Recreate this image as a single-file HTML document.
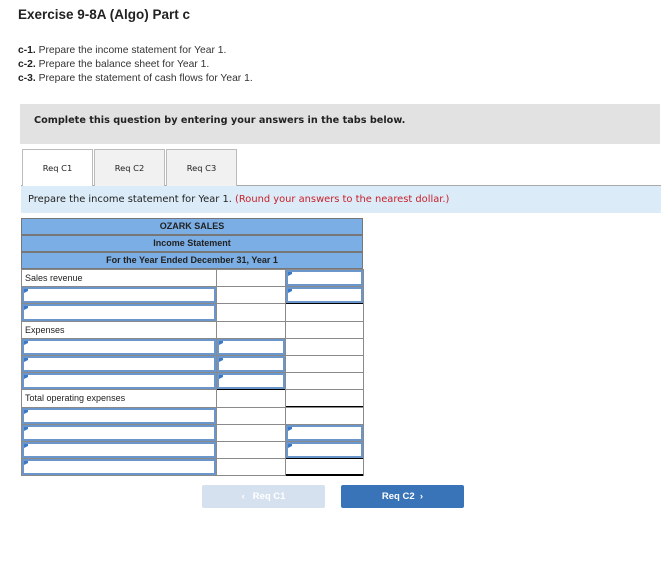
<!DOCTYPE html>
<html><head><style>
body{margin:0;width:667px;height:570px;background:#fff;font-family:"Liberation Sans",sans-serif;position:relative;overflow:hidden}
.a{position:absolute}
h1{position:absolute;left:18px;top:7px;margin:0;font-size:13.5px;font-weight:bold;color:#222}
.q{position:absolute;left:18px;font-size:10.3px;color:#333}
.q b{color:#222}
.c{position:absolute;border:1px solid #8a8a8a;box-sizing:border-box;background:#fff;font-size:9px;color:#222;padding:3px 0 0 3px;font-family:"Liberation Sans",sans-serif}
.in::after{content:"";position:absolute;left:0;top:0;right:0;bottom:0;border:2px solid #6b96cc;}
.in::before{content:"";position:absolute;left:2px;top:2px;width:0;height:0;border-top:2px solid #3b78c8;border-bottom:2px solid transparent;border-left:4px solid #3b78c8;z-index:2}
.hd{position:absolute;left:21px;width:342px;height:17px;background:#7aaee4;border:1px solid #777;box-sizing:border-box;font-size:9px;font-weight:bold;color:#222;text-align:center;line-height:15px}
.v{font-family:"DejaVu Sans",sans-serif}
</style></head><body>
<h1>Exercise 9-8A (Algo) Part c</h1>
<div class="q" style="top:45px"><b>c-1.</b> Prepare the income statement for Year 1.</div>
<div class="q" style="top:59px"><b>c-2.</b> Prepare the balance sheet for Year 1.</div>
<div class="q" style="top:73px"><b>c-3.</b> Prepare the statement of cash flows for Year 1.</div>
<div class="a" style="left:20px;top:104px;width:640px;height:40px;background:#e2e2e2"></div>
<div class="a v" style="left:34px;top:115px;font-size:9.7px;font-weight:bold;color:#222;white-space:nowrap">Complete this question by entering your answers in the tabs below.</div>
<div class="a" style="left:21px;top:185px;width:640px;border-top:1px solid #aaa"></div>
<div class="a v" style="left:22px;top:149px;width:69px;height:37px;background:#fff;border:1px solid #bbb;border-bottom:none;font-size:8.3px;text-align:center;line-height:36px;color:#222">Req C1</div>
<div class="a v" style="left:94px;top:149px;width:69px;height:36px;background:#f1f1f1;border:1px solid #bbb;border-bottom:none;font-size:8.3px;text-align:center;line-height:36px;color:#222">Req C2</div>
<div class="a v" style="left:166px;top:149px;width:69px;height:36px;background:#f1f1f1;border:1px solid #bbb;border-bottom:none;font-size:8.3px;text-align:center;line-height:36px;color:#222">Req C3</div>
<div class="a" style="left:21px;top:186px;width:640px;height:27px;background:#dbecf8"></div>
<div class="a v" style="left:28px;top:194px;font-size:9.9px;color:#222;white-space:nowrap">Prepare the income statement for Year 1. <span style="color:#c8202a">(Round your answers to the nearest dollar.)</span></div>
<div class="hd" style="top:218px">OZARK SALES</div>
<div class="hd" style="top:235px">Income Statement</div>
<div class="hd" style="top:252px">For the Year Ended December 31, Year 1</div>
<div id="g"></div>
<div class="a" style="left:202px;top:485px;width:123px;height:23px;background:#d5e1ef;border-radius:2px;color:#fff;font-size:9.5px;font-weight:bold;text-align:center;line-height:23px">&#8249;&nbsp;&nbsp; Req C1</div>
<div class="a" style="left:341px;top:485px;width:123px;height:23px;background:#3a74b8;border-radius:2px;color:#fff;font-size:9.5px;font-weight:bold;text-align:center;line-height:23px">Req C2 &nbsp;&#8250;</div>
<script>
var rows=[["Sales revenue",0,1],[1,0,1],[1,0,0],["Expenses",0,0],[1,1,0],[1,1,0],[1,1,0],["Total operating expenses",0,0],[1,0,0],[1,0,1],[1,0,1],[1,0,0]];
var xs=[21,216,285,363],h="";
rows.forEach(function(r,i){var y=269+i*17.2;
for(var j=0;j<3;j++){var v=r[j];var cls="c"+(v===1?" in":"");var t=(typeof v=="string")?v:"";
h+='<div class="'+cls+'" style="left:'+xs[j]+'px;top:'+y+'px;width:'+(xs[j+1]-xs[j]+1)+'px;height:18.2px">'+t+'</div>';}});
h+='<div class="a" style="left:286px;top:303px;width:77px;height:1px;background:#000"></div>';
h+='<div class="a" style="left:217px;top:389px;width:68px;height:1px;background:#000"></div>';
h+='<div class="a" style="left:286px;top:406px;width:77px;height:1px;background:#000"></div>';
h+='<div class="a" style="left:286px;top:458px;width:77px;height:1px;background:#000"></div>';
h+='<div class="a" style="left:286px;top:474px;width:77px;height:2px;background:#000"></div>';
document.getElementById("g").innerHTML=h;
</script>
</body></html>
